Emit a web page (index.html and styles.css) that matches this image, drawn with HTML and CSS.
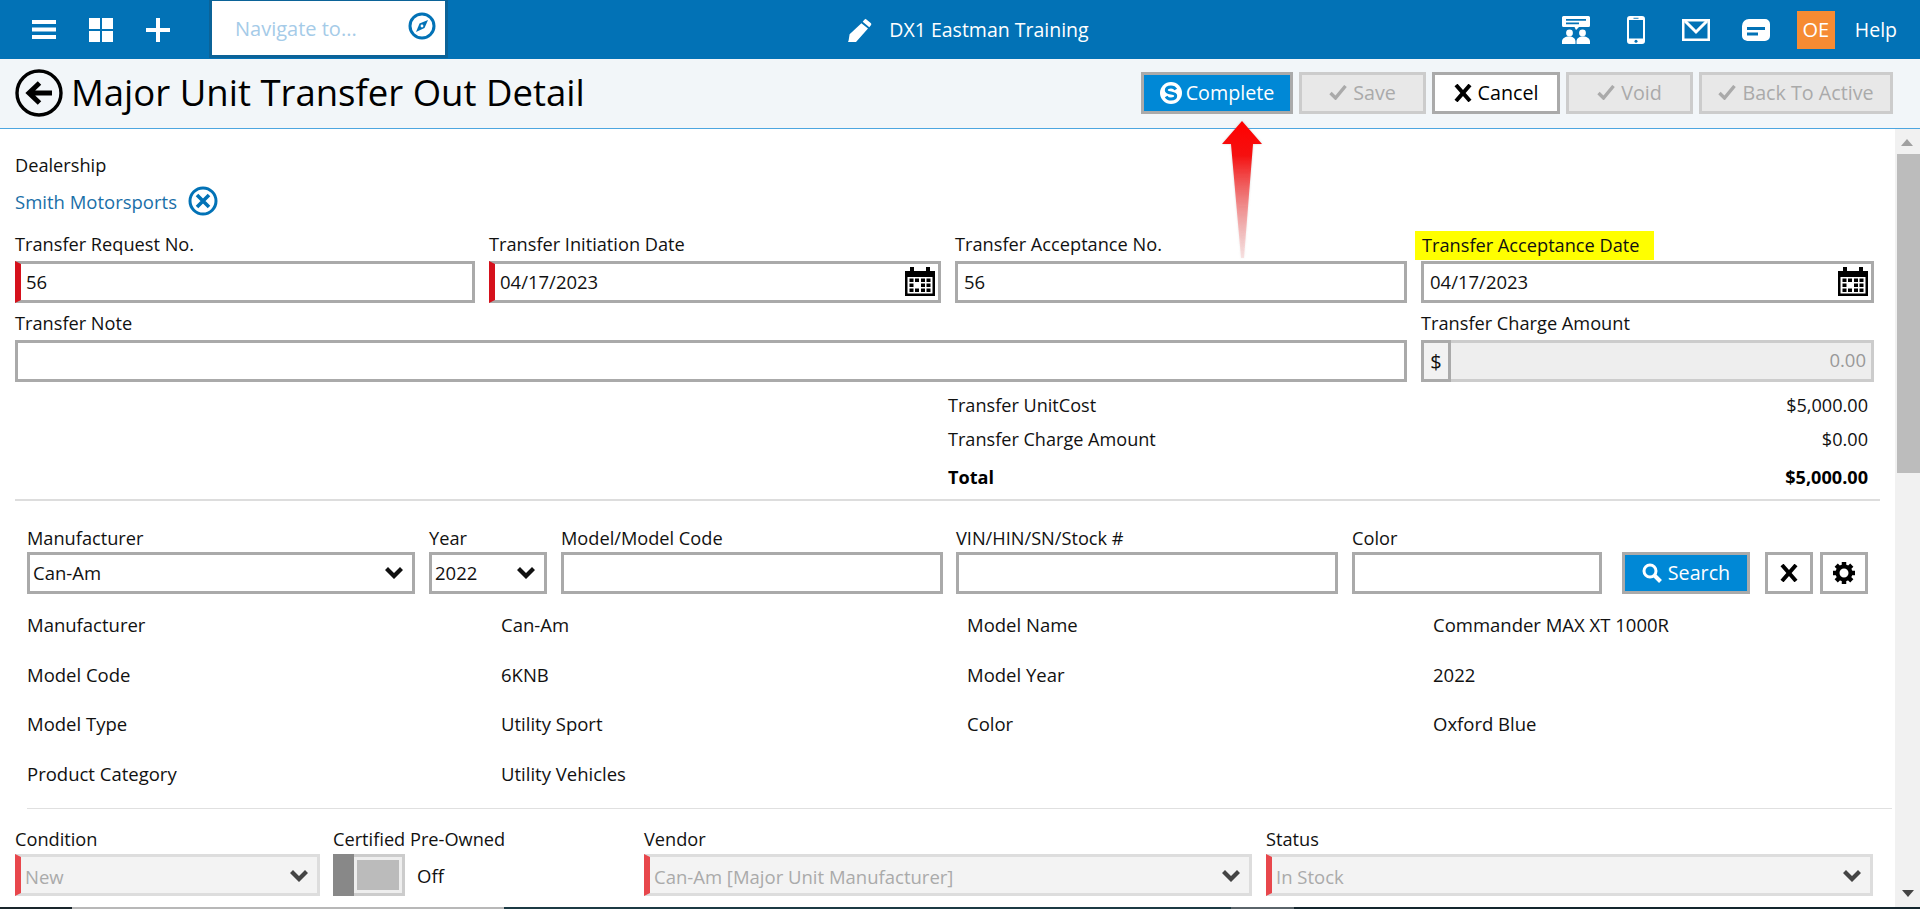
FILE: index.html
```html
<!DOCTYPE html>
<html lang="en">
<head>
<meta charset="utf-8">
<title>Major Unit Transfer Out Detail</title>
<link rel="stylesheet" href="styles.css">
</head>
<body>
<div class="app">
  <header class="topbar">
    <div class="top-left">
      <svg class="ic-menu" width="24" height="19" viewBox="0 0 24 19"><path fill="#fff" d="M0 0h24v4H0zM0 7.500h24v4H0zM0 15h24v4H0z"/></svg>
      <svg class="ic-grid" width="24" height="24" viewBox="0 0 24 24"><path fill="#fff" d="M0 0h11v11H0zM13 0h11v11H13zM0 13h11v11H0zM13 13h11v11H13z"/></svg>
      <svg class="ic-plus" width="24" height="24" viewBox="0 0 24 24"><path fill="#fff" d="M10 0h4v10h10v4H14v10h-4V14H0v-4h10z"/></svg>
      <div class="navbox">
        <span class="nav-ph">Navigate to...</span>
        <svg width="28" height="28" viewBox="0 0 28 28"><circle cx="14" cy="14" r="12" fill="none" stroke="#0272b6" stroke-width="3"/><path fill="#0272b6" d="M20 8l-3.500 8L8 20l3.500-8.500z"/><circle cx="14" cy="14" r="1.400" fill="#fff"/></svg>
      </div>
    </div>
    <div class="top-center">
      <svg width="24" height="24" viewBox="0 0 24 24"><path fill="#fff" d="M17.500 0.800l5.200 4.200c.7.600.8 1.500.2 2.200l-1.600 2-6.600-5.400 1.600-2c.5-.6 1.400-.6 1.200-1zM13.400 5.200l6.600 5.400L8 24H1l-1 0 .6-1.500 1-6.300z"/></svg>
      <span>DX1 Eastman Training</span>
    </div>
    <div class="top-right">
      <svg width="28" height="28" viewBox="0 0 28 28"><path fill="#fff" d="M1.500 0h25A1.500 1.500 0 0 1 28 1.500v8A1.500 1.500 0 0 1 26.500 11H17l-3 3-1.500-3h-11A1.500 1.500 0 0 1 0 9.500v-8A1.500 1.500 0 0 1 1.500 0z"/><path fill="#0272b6" d="M4 3h20v1.800H4zM4 6.500h13v1.800H4z"/><circle cx="7.500" cy="17" r="3.400" fill="#fff"/><circle cx="20.500" cy="17" r="3.400" fill="#fff"/><path fill="#fff" d="M0 28v-2.500c0-3 3-5 7-5s6.500 2 6.500 5V28zM14.500 28v-2.500c0-3 2.500-5 6.500-5s7 2 7 5V28z"/></svg>
      <svg class="ic-phone" width="18" height="28" viewBox="0 0 18 28"><path fill="#fff" fill-rule="evenodd" d="M3 0h12a3 3 0 0 1 3 3v22a3 3 0 0 1-3 3H3a3 3 0 0 1-3-3V3a3 3 0 0 1 3-3zM2 4v18.500h14V4z"/><circle cx="9" cy="25.200" r="1.500" fill="#0272b6"/><path fill="#0272b6" d="M6.500 1.800h5v.9h-5z"/></svg>
      <svg class="ic-mail" width="28" height="22" viewBox="0 0 28 22"><path fill="#fff" fill-rule="evenodd" d="M0 0h28v22H0zM2.500 2.500v17h23v-17z"/><path fill="none" stroke="#fff" stroke-width="3" d="M3 2l11 11L25 2"/></svg>
      <svg class="ic-chat" width="28" height="22" viewBox="0 0 28 22"><path fill="#fff" d="M7 0h16a5 5 0 0 1 5 5v12a5 5 0 0 1-5 5H5l-1-.5A5 5 0 0 1 0 17V7a7 7 0 0 1 7-7z"/><path fill="#0272b6" d="M5 8h18v3H5zM5 13.500h11v3H5z"/></svg>
      <span class="avatar">OE</span>
      <span class="help">Help</span>
    </div>
  </header>

  <section class="titlebar">
    <div class="title-left">
      <svg width="48" height="48" viewBox="0 0 48 48"><circle cx="24" cy="24" r="22" fill="none" stroke="#000" stroke-width="3.400"/><path fill="none" stroke="#000" stroke-width="5" d="M37 24H15M24.500 14L14 24l10.500 10"/></svg>
      <h1>Major Unit Transfer Out Detail</h1>
    </div>
    <div class="actions">
      <button class="btn primary complete" type="button">
        <svg width="22" height="22" viewBox="0 0 22 22"><circle cx="11" cy="11" r="11" fill="#fff"/><path fill="none" stroke="#0088d6" stroke-width="3" d="M15.800 7.600C14.800 5.800 13 5 11 5 8.300 5 6.300 6.200 6.300 8.200c0 4 9.400 1.600 9.400 5.600 0 2-2 3.200-4.700 3.200-2.100 0-3.900-.9-4.900-2.600"/></svg>
        Complete
      </button>
      <button class="btn disabled save" type="button"><svg class="check" width="18" height="15" viewBox="0 0 18 15"><path fill="none" stroke="#aaa" stroke-width="3.400" d="M1.500 8l5 5L16.500 1"/></svg>Save</button>
      <button class="btn plain cancel" type="button"><svg width="18" height="18" viewBox="0 0 18 18"><path fill="none" stroke="#000" stroke-width="4" d="M2 1l14 16M16 1L2 17"/></svg>Cancel</button>
      <button class="btn disabled void" type="button"><svg class="check" width="18" height="15" viewBox="0 0 18 15"><path fill="none" stroke="#aaa" stroke-width="3.400" d="M1.500 8l5 5L16.500 1"/></svg>Void</button>
      <button class="btn disabled back" type="button"><svg class="check" width="18" height="15" viewBox="0 0 18 15"><path fill="none" stroke="#aaa" stroke-width="3.400" d="M1.500 8l5 5L16.500 1"/></svg>Back To Active</button>
    </div>
  </section>

  <main class="body">
    <div class="content">
      <div class="label dealer-label">Dealership</div>
      <div class="dealer">
        <span class="dealer-name">Smith Motorsports</span>
        <svg width="30" height="30" viewBox="0 0 30 30"><circle cx="15" cy="15" r="13" fill="none" stroke="#0272b6" stroke-width="3"/><path fill="none" stroke="#0272b6" stroke-width="3.600" d="M9 9l12 12M21 9L9 21"/></svg>
      </div>

      <div class="grid4">
        <div class="field">
          <div class="label">Transfer Request No.</div>
          <div class="input req">56</div>
        </div>
        <div class="field">
          <div class="label">Transfer Initiation Date</div>
          <div class="input req date">04/17/2023
            <svg class="cal" width="30" height="29" viewBox="0 0 30 29"><path fill="#000" fill-rule="evenodd" d="M0 4h5V0h4v4h12V0h4v4h5v25H0zM2.500 10v16.500h25V10z"/><path fill="#000" d="M4.500 11.500h4v3.500h-4zM10 11.500h4v3.500h-4zM16 11.500h4v3.500h-4zM21.500 11.500h4v3.500h-4zM4.500 16.500h4V20h-4zM16 16.500h4V20h-4zM21.500 16.500h4V20h-4zM4.500 21.500h4V25h-4zM10 21.500h4V25h-4zM16 21.500h4V25h-4zM21.500 21.500h4V25h-4z"/></svg>
          </div>
        </div>
        <div class="field">
          <div class="label">Transfer Acceptance No.</div>
          <div class="input">56</div>
        </div>
        <div class="field">
          <div class="label"><span class="mark">Transfer Acceptance Date</span></div>
          <div class="input date">04/17/2023
            <svg class="cal" width="30" height="29" viewBox="0 0 30 29"><path fill="#000" fill-rule="evenodd" d="M0 4h5V0h4v4h12V0h4v4h5v25H0zM2.500 10v16.500h25V10z"/><path fill="#000" d="M4.500 11.500h4v3.500h-4zM10 11.500h4v3.500h-4zM16 11.500h4v3.500h-4zM21.500 11.500h4v3.500h-4zM4.500 16.500h4V20h-4zM16 16.500h4V20h-4zM21.500 16.500h4V20h-4zM4.500 21.500h4V25h-4zM10 21.500h4V25h-4zM16 21.500h4V25h-4zM21.500 21.500h4V25h-4z"/></svg>
          </div>
        </div>
        <div class="field span3">
          <div class="label">Transfer Note</div>
          <div class="input"></div>
        </div>
        <div class="field">
          <div class="label">Transfer Charge Amount</div>
          <div class="money"><span class="addon">$</span><span class="money-val">0.00</span></div>
        </div>
      </div>

      <div class="summary">
        <span>Transfer UnitCost</span><span class="val">$5,000.00</span>
        <span>Transfer Charge Amount</span><span class="val">$0.00</span>
        <b class="total">Total</b><b class="val total">$5,000.00</b>
      </div>
      <hr class="rule-a">

      <div class="search-row">
        <div class="field w-man"><div class="label">Manufacturer</div><div class="select">Can-Am<svg class="chev" width="18" height="12" viewBox="0 0 18 12"><path fill="#111" d="M0 3l3-3 6 6 6-6 3 3-9 9z"/></svg></div></div>
        <div class="field w-year"><div class="label">Year</div><div class="select">2022<svg class="chev" width="18" height="12" viewBox="0 0 18 12"><path fill="#111" d="M0 3l3-3 6 6 6-6 3 3-9 9z"/></svg></div></div>
        <div class="field w-model"><div class="label">Model/Model Code</div><div class="input"></div></div>
        <div class="field w-vin"><div class="label">VIN/HIN/SN/Stock #</div><div class="input"></div></div>
        <div class="field w-color"><div class="label">Color</div><div class="input"></div></div>
        <button class="btn primary search" type="button"><svg width="20" height="20" viewBox="0 0 20 20"><circle cx="8" cy="8" r="6" fill="none" stroke="#fff" stroke-width="3"/><path stroke="#fff" stroke-width="4" d="M12 12l6.500 6.500"/></svg>Search</button>
        <button class="btn plain square clear" type="button"><svg width="18" height="18" viewBox="0 0 18 18"><path fill="none" stroke="#000" stroke-width="4" d="M2 1l14 16M16 1L2 17"/></svg></button>
        <button class="btn plain square gear" type="button"><svg width="22" height="22" viewBox="0 0 22 22"><circle cx="11" cy="11" r="6.500" fill="none" stroke="#000" stroke-width="4"/><path stroke="#000" stroke-width="4.500" d="M11 0v5M11 17v5M0 11h5M17 11h5M3.200 3.200l3.500 3.500M15.300 15.300l3.500 3.500M18.800 3.200l-3.500 3.500M6.700 15.300l-3.500 3.500"/></svg></button>
      </div>

      <dl class="details">
        <dt>Manufacturer</dt><dd>Can-Am</dd><dt>Model Name</dt><dd>Commander MAX XT 1000R</dd>
        <dt>Model Code</dt><dd>6KNB</dd><dt>Model Year</dt><dd>2022</dd>
        <dt>Model Type</dt><dd>Utility Sport</dd><dt>Color</dt><dd>Oxford Blue</dd>
        <dt>Product Category</dt><dd>Utility Vehicles</dd>
      </dl>
      <hr class="rule-b">

      <div class="bottom-row">
        <div class="field"><div class="label">Condition</div><div class="select off">New<svg class="chev" width="18" height="12" viewBox="0 0 18 12"><path fill="#444" d="M0 3l3-3 6 6 6-6 3 3-9 9z"/></svg></div></div>
        <div class="field"><div class="label">Certified Pre-Owned</div>
          <div class="toggle-wrap"><span class="toggle"><span class="knob"></span><span class="track"></span></span><span>Off</span></div>
        </div>
        <div class="field"><div class="label">Vendor</div><div class="select off">Can-Am [Major Unit Manufacturer]<svg class="chev" width="18" height="12" viewBox="0 0 18 12"><path fill="#444" d="M0 3l3-3 6 6 6-6 3 3-9 9z"/></svg></div></div>
        <div class="field status"><div class="label">Status</div><div class="select off">In Stock<svg class="chev" width="18" height="12" viewBox="0 0 18 12"><path fill="#444" d="M0 3l3-3 6 6 6-6 3 3-9 9z"/></svg></div></div>
      </div>
    </div>
    <aside class="scrollbar">
      <span class="sb-up"></span>
      <span class="sb-thumb"></span>
      <span class="sb-down"></span>
    </aside>
  </main>
  <div class="taskbar"><span class="tb-a"></span><span class="tb-b"></span><span class="tb-c"></span><span class="tb-d"></span><span class="tb-e"></span></div>

  <svg class="arrow" width="60" height="140" viewBox="0 0 60 140">
    <defs><linearGradient id="ag" x1="0" y1="0" x2="0" y2="1"><stop offset="0" stop-color="#ff0000"/><stop offset=".25" stop-color="#f51010"/><stop offset="1" stop-color="#f8a0a0" stop-opacity=".25"/></linearGradient></defs>
    <path fill="url(#ag)" d="M30 1l20 23H41L32 138h-3L19 24H10z"/>
  </svg>
</div>
</body>
</html>
```
FILE: styles.css
```css
*{box-sizing:border-box}
html,body{margin:0;height:100%;overflow:hidden}
body{font-family:"Open Sans","Noto Sans",sans-serif;font-size:18.500px;color:#111;background:#fff}
.app{position:relative;display:flex;flex-direction:column;height:909px;overflow:hidden}

.topbar{flex:none;height:59px;background:#0272b6;display:grid;grid-template-columns:1fr auto 1fr;align-items:center;color:#fff}
.top-left{display:flex;align-items:center;padding-left:32px}
.ic-grid{margin-left:33px}
.ic-plus{margin-left:33px}
.navbox{margin-left:39px;width:239px;height:58px;margin-top:-1px;background:#fff;border:3px solid #0b6398;border-top-width:1px;border-bottom-width:3px;display:flex;align-items:center;justify-content:space-between;padding:0 9px 4px 23px}
.nav-ph{color:#a5cbe8;font-size:20px;padding-top:4px}
.top-center{display:flex;align-items:center;gap:17px;font-size:19.500px;justify-self:center;margin-left:17px}
.top-right{display:flex;align-items:center;justify-self:end;padding-right:23px}
.ic-phone{margin-left:37px}
.ic-mail{margin-left:37px}
.ic-chat{margin-left:32px}
.avatar{margin-left:27px;width:38px;height:38px;background:#f68b33;display:flex;align-items:center;justify-content:center;font-size:20px}
.help{margin-left:20px;font-size:19.500px}

.titlebar{flex:none;height:70px;background:#f2f6f9;border-bottom:1px solid #4da6e0;display:flex;align-items:center;justify-content:space-between;padding:0 27px 1px 15px}
.title-left{display:flex;align-items:center;gap:8px}
h1{margin:-2px 0 0;font-weight:400;font-size:36.500px;color:#000;line-height:46px}
.actions{display:flex;gap:6px}
.btn{height:42px;border:3px solid #aaa;font:inherit;font-size:19.700px;display:inline-flex;align-items:center;justify-content:center;gap:6px;padding:0 0 1px;background:#fff;color:#000}
.primary{background:#0088d6;color:#fff}
.disabled{background:#e8e8e8;border-color:#ccc;color:#aaa}
.complete{width:152px;gap:4px}
.save{width:127px}
.cancel{width:128px}
.void{width:127px}
.back{width:194px}

.body{flex:1;min-height:0;display:flex}
.content{flex:1;min-width:0;padding:24px 21px 0 15px}
.label{line-height:24px;height:24px;margin-bottom:4px;white-space:nowrap;font-size:18.200px}
.dealer-label{margin:0 0 1px}
.dealer{display:flex;align-items:center;gap:11px;height:30px;margin-top:9px;color:#1a6fa8}
.grid4{display:grid;grid-template-columns:460px 452px 452px 453px;column-gap:14px;row-gap:9px;margin-top:17px}
.grid4 .label{margin-top:-1px;margin-bottom:5px}
.span3{grid-column:span 3}
.input{height:42px;border:3px solid #aaa;background:#fff;padding:0 6px 1px;display:flex;align-items:center;justify-content:space-between;white-space:nowrap}
.req{border-left:6px solid #d5111c;padding-left:5px}
.cal{margin-right:-3px;flex:none}
.mark{display:inline-block;background:#ff0;height:29px;line-height:28px;padding:0 14px 0 7px;margin:-1px 0 0 -6px}
.money{height:42px;border:3px solid #ccc;background:#eee;display:flex;align-items:stretch}
.addon{width:30px;margin:-3px 0 -3px -3px;border:3px solid #aaa;background:#f2f2f2;display:flex;align-items:center;justify-content:center;font-size:20px}
.money-val{flex:1;text-align:right;padding-right:5px;color:#999;line-height:34px}

.summary{display:grid;grid-template-columns:1fr auto;grid-template-rows:34px 34px 38px;align-items:center;margin:6px 6px 1px 933px;font-size:18.100px}
.val{text-align:right}
.total{font-weight:700;color:#000;padding-top:4px}
hr{border:0;margin:0}
.rule-a{height:2px;background:#ddd;margin:5px -6px 0 0}

.search-row{display:flex;align-items:flex-end;margin:25px 6px 0 12px}
.search-row .label{margin:0 0 2px}
.w-man{width:388px}
.w-year{width:118px;margin-left:14px}
.w-model{width:382px;margin-left:14px}
.w-vin{width:382px;margin-left:13px}
.w-color{width:250px;margin-left:14px}
.search{width:128px;margin-left:20px}
.square{width:48px;margin-left:7px}
.clear{margin-left:15px}
.select{height:42px;border:3px solid #aaa;background:#fff;padding:0 9px 1px 3px;display:flex;align-items:center;justify-content:space-between;white-space:nowrap}
.select.off{border-color:#ddd;border-left:6px solid #e8474c;background:#f3f3f3;color:#aaa;padding:2px 9px 0 4px}

.details{display:grid;grid-template-columns:474px 466px 466px auto;grid-auto-rows:49.500px;align-items:center;margin:6px 0 0 12px;font-size:18.500px;line-height:24px}
.details dt,.details dd{margin:0;font-weight:400;padding-top:1px}
.rule-b{height:1px;background:#e0e0e0;margin:10px -18px 0 12px}

.bottom-row{display:grid;grid-template-columns:305px 298px 608px 608px;column-gap:13px;margin-top:17px}
.bottom-row .label{margin-bottom:4px;padding-top:1px}
.status{margin-left:1px}
.toggle-wrap{display:flex;align-items:center;gap:12px;height:42px}
.toggle{width:72px;height:42px;border:3px solid #ccc;background:#eee;display:flex}
.knob{width:21px;margin:-3px 0 -3px -3px;background:#888}
.track{flex:1;background:#bbb;margin:3px}

.scrollbar{flex:none;width:25px;background:#f1f1f1;display:flex;flex-direction:column;align-items:flex-end}
.sb-up{width:0;height:0;border:6px solid transparent;border-top:0;border-bottom:7px solid #a0a0a0;margin:10px 7px 0 0}
.sb-thumb{width:23px;height:319px;background:#bcbcbc;margin-top:8px}
.sb-down{width:0;height:0;border:6px solid transparent;border-bottom:0;border-top:7px solid #444;margin:auto 6px 10px 0}

.taskbar{flex:none;height:2px;display:flex;background:#16303b}
.tb-a{width:72px;background:#1a262c}
.tb-b{width:432px;background:#b8b8b8}
.tb-c{width:727px;background:#1c3a44}
.tb-d{width:63px;background:#5a646a}
.tb-e{flex:1;background:#14262e}

.arrow{position:absolute;left:1212px;top:120px;filter:drop-shadow(0 0 1px rgba(120,120,120,.35))}
```
